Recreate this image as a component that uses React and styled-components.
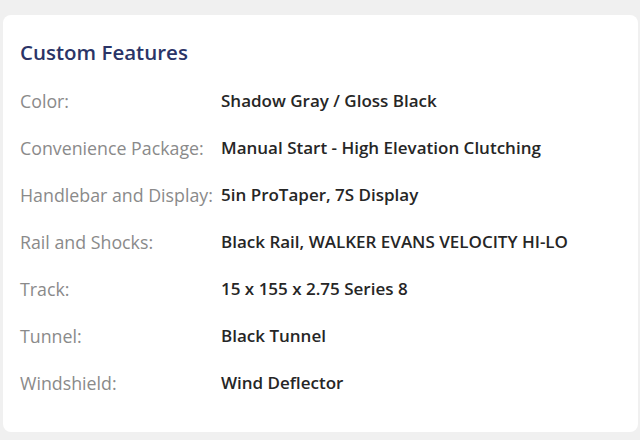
import React from "react";
import styled, { createGlobalStyle } from "styled-components";

const GlobalStyle = createGlobalStyle`
  html, body {
    margin: 0;
    padding: 0;
    background: #f0f0f0;
  }
  body {
    font-family: "Open Sans", "Noto Sans", sans-serif;
  }
`;

const Page = styled.div`
  width: 640px;
  height: 440px;
  padding: 15px 2px 8px 3px;
  box-sizing: border-box;
`;

const Card = styled.section`
  height: 100%;
  background: #ffffff;
  border-radius: 8px;
  padding: 22px 17px 0 17px;
  box-sizing: border-box;
`;

const Title = styled.h2`
  margin: 0 0 10px;
  font-size: 20.5px;
  font-weight: 600;
  color: #2b3467;
  line-height: 30px;
`;

const List = styled.dl`
  display: grid;
  grid-template-columns: 201px 1fr;
  grid-auto-rows: 47px;
  align-items: center;
  margin: 0;
`;

const Label = styled.dt`
  font-size: 17.8px;
  color: #8a8a8a;
  margin: 0;
  white-space: nowrap;
`;

const Value = styled.dd`
  font-size: 17px;
  font-weight: 600;
  color: #262626;
  margin: 0;
  white-space: nowrap;
`;

const features = [
  ["Color:", "Shadow Gray / Gloss Black"],
  ["Convenience Package:", "Manual Start - High Elevation Clutching"],
  ["Handlebar and Display:", "5in ProTaper, 7S Display"],
  ["Rail and Shocks:", "Black Rail, WALKER EVANS VELOCITY HI-LO"],
  ["Track:", "15 x 155 x 2.75 Series 8"],
  ["Tunnel:", "Black Tunnel"],
  ["Windshield:", "Wind Deflector"],
];

export default function App() {
  return (
    <>
      <GlobalStyle />
      <Page>
        <Card>
          <Title>Custom Features</Title>
          <List>
            {features.map(([label, value]) => (
              <React.Fragment key={label}>
                <Label>{label}</Label>
                <Value>{value}</Value>
              </React.Fragment>
            ))}
          </List>
        </Card>
      </Page>
    </>
  );
}
